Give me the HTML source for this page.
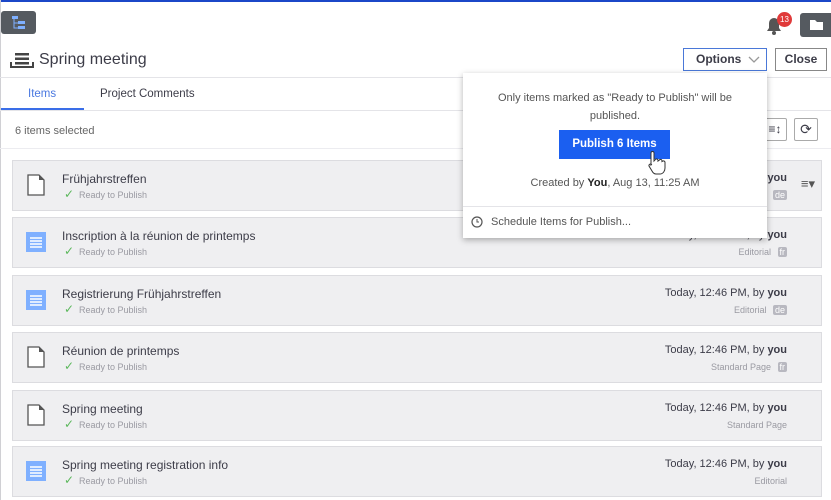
<!DOCTYPE html>
<html><head><meta charset="utf-8"><style>
*{box-sizing:border-box;margin:0;padding:0}
body{width:831px;height:500px;overflow:hidden;background:#fff;font-family:"Liberation Sans",sans-serif;color:#3c3c48;position:relative}
.abs{position:absolute}
.row{position:absolute;left:12px;width:810px;height:51px;background:#efeff1;border:1px solid #dcdce0}
.row .t{position:absolute;left:49px;top:11px;font-size:12px;color:#3c3c48}
.row .s{position:absolute;left:66px;top:29px;font-size:9px;color:#9a9aa2}
.row .ck{position:absolute;left:51px;top:26px;color:#5cb85c;font-size:12px}
.row .d{position:absolute;right:34px;top:11px;font-size:11px;color:#3c3c48}
.row .ty{position:absolute;right:34px;top:29px;font-size:9px;color:#9a9aa2}
.lang{display:inline-block;background:#b8b8c0;color:#fff;font-size:9px;padding:0 2px;border-radius:2px;margin-left:4px}
.doc{position:absolute;left:13px;top:13px;width:20px;height:22px}
</style></head><body>
<div class="abs" style="left:0;top:0;width:831px;height:2px;background:#1b47c8"></div>
<div class="abs" style="left:0;top:0;width:1px;height:500px;background:#d0d0d4"></div>
<div class="abs" style="left:1px;top:11px;width:35px;height:23px;background:#555a60;border-radius:3px">
<svg width="35" height="23"><rect x="11" y="5" width="6" height="3" fill="#7fb0ff"/><rect x="17" y="10" width="7" height="3" fill="#7fb0ff"/><rect x="17" y="15" width="7" height="3" fill="#7fb0ff"/><path d="M13 8V17H17M13 12H17" stroke="#7fb0ff" fill="none"/></svg></div>
<svg class="abs" style="left:764px;top:15px" width="22" height="20"><path d="M3 16h14l-2-3V8a5 5 0 0 0-10 0v5z" fill="#555"/><circle cx="10" cy="18" r="2" fill="#555"/></svg>
<div class="abs" style="left:777px;top:12px;width:15px;height:15px;border-radius:50%;background:#e03a3a;color:#fff;font-size:8px;text-align:center;line-height:15px">13</div>
<div class="abs" style="left:800px;top:13px;width:31px;height:24px;background:#555a60;border-radius:3px 0 0 3px"><svg width="31" height="24"><path d="M10 7h5l2 2h6v8H10z" fill="#fff"/></svg></div>
<svg class="abs" style="left:9px;top:50px" width="26" height="20"><rect x="6" y="3" width="14" height="2.5" fill="#444"/><rect x="6" y="7.5" width="14" height="2.5" fill="#444"/><rect x="6" y="12" width="14" height="2.5" fill="#444"/><path d="M2 12v5h22v-5" stroke="#444" stroke-width="2" fill="none"/></svg>
<div class="abs" style="left:39px;top:51px;font-size:16px;color:#3c3c48">Spring meeting</div>
<div class="abs" style="left:683px;top:48px;width:84px;height:23px;border:1px solid #4a78d8;font-size:12px;font-weight:bold;line-height:21px;padding-left:12px">Options</div>
<svg class="abs" style="left:748px;top:56px" width="12" height="8"><path d="M1 1l5 5 5-5" stroke="#999" fill="none" stroke-width="1.3"/></svg>
<div class="abs" style="left:775px;top:48px;width:52px;height:23px;border:1px solid #888;font-size:12px;font-weight:bold;line-height:21px;text-align:center">Close</div>
<div class="abs" style="left:0;top:77px;width:831px;height:1px;background:#e4e4e8"></div>
<div class="abs" style="left:28px;top:88px;font-size:11.5px;color:#4a78e0">Items</div>
<div class="abs" style="left:100px;top:88px;font-size:11.5px;color:#3c3c48">Project Comments</div>
<div class="abs" style="left:1px;top:108px;width:83px;height:2px;background:#3a6ee8"></div>
<div class="abs" style="left:0;top:110px;width:831px;height:1px;background:#e4e4e8"></div>
<div class="abs" style="left:15px;top:125px;font-size:11px;color:#666">6 items selected</div>
<div class="abs" style="left:763px;top:118px;width:24px;height:23px;border:1px solid #aaa;border-radius:2px;font-size:12px;text-align:center;line-height:21px">≡↕</div>
<div class="abs" style="left:794px;top:118px;width:24px;height:23px;border:1px solid #aaa;border-radius:2px;font-size:14px;text-align:center;line-height:21px">⟳</div>
<div class="abs" style="left:0;top:148px;width:831px;height:1px;background:#ececf0"></div>

<div class="row" style="top:160px"><svg class="doc" viewBox="0 0 20 22"><path d="M2 1h11l5 5v15H2z" fill="#fff" stroke="#555" stroke-width="1.3"/><path d="M13 1v5h5z" fill="#555"/></svg><div class="t">Frühjahrstreffen</div><span class="ck">✓</span><div class="s">Ready to Publish</div><div class="d">Today, 12:46 PM, by <b>you</b></div><div class="ty">Editorial <span class="lang">de</span></div><div class="abs" style="right:6px;top:15px;font-size:13px;color:#555">≡▾</div></div>
<div class="row" style="top:217px"><svg class="doc" viewBox="0 0 20 22"><rect x="0" y="1" width="20" height="20" fill="#7fb0ff"/><path d="M4 7h12M4 10h12M4 13h12M4 16h12" stroke="#fff" stroke-width="1.6"/></svg><div class="t">Inscription à la réunion de printemps</div><span class="ck">✓</span><div class="s">Ready to Publish</div><div class="d">Today, 12:46 PM, by <b>you</b></div><div class="ty">Editorial <span class="lang">fr</span></div></div>
<div class="row" style="top:275px"><svg class="doc" viewBox="0 0 20 22"><rect x="0" y="1" width="20" height="20" fill="#7fb0ff"/><path d="M4 7h12M4 10h12M4 13h12M4 16h12" stroke="#fff" stroke-width="1.6"/></svg><div class="t">Registrierung Frühjahrstreffen</div><span class="ck">✓</span><div class="s">Ready to Publish</div><div class="d">Today, 12:46 PM, by <b>you</b></div><div class="ty">Editorial <span class="lang">de</span></div></div>
<div class="row" style="top:332px"><svg class="doc" viewBox="0 0 20 22"><path d="M2 1h11l5 5v15H2z" fill="#fff" stroke="#555" stroke-width="1.3"/><path d="M13 1v5h5z" fill="#555"/></svg><div class="t">Réunion de printemps</div><span class="ck">✓</span><div class="s">Ready to Publish</div><div class="d">Today, 12:46 PM, by <b>you</b></div><div class="ty">Standard Page <span class="lang">fr</span></div></div>
<div class="row" style="top:390px"><svg class="doc" viewBox="0 0 20 22"><path d="M2 1h11l5 5v15H2z" fill="#fff" stroke="#555" stroke-width="1.3"/><path d="M13 1v5h5z" fill="#555"/></svg><div class="t">Spring meeting</div><span class="ck">✓</span><div class="s">Ready to Publish</div><div class="d">Today, 12:46 PM, by <b>you</b></div><div class="ty">Standard Page</div></div>
<div class="row" style="top:446px"><svg class="doc" viewBox="0 0 20 22"><rect x="0" y="1" width="20" height="20" fill="#7fb0ff"/><path d="M4 7h12M4 10h12M4 13h12M4 16h12" stroke="#fff" stroke-width="1.6"/></svg><div class="t">Spring meeting registration info</div><span class="ck">✓</span><div class="s">Ready to Publish</div><div class="d">Today, 12:46 PM, by <b>you</b></div><div class="ty">Editorial</div></div>

<div class="abs" style="left:463px;top:73px;width:304px;height:165px;background:#fff;box-shadow:0 2px 6px rgba(0,0,0,.3)">
<div class="abs" style="left:0;top:16px;width:304px;text-align:center;font-size:11px;line-height:18px;color:#555">Only items marked as "Ready to Publish" will be<br>published.</div>
<div class="abs" style="left:96px;top:57px;width:111px;height:29px;background:#1b5ff0;color:#fff;font-size:11.5px;font-weight:bold;text-align:center;line-height:29px">Publish 6 Items</div>
<div class="abs" style="left:0;top:104px;width:304px;text-align:center;font-size:11px;color:#555">Created by <b style="color:#222">You</b>, Aug 13, 11:25 AM</div>
<div class="abs" style="left:0;top:133px;width:304px;height:1px;background:#e4e4e8"></div>
<svg class="abs" style="left:8px;top:143px" width="12" height="12"><circle cx="6" cy="6" r="5" stroke="#555" fill="none" stroke-width="1.2"/><path d="M6 3v3h2" stroke="#555" fill="none"/></svg>
<div class="abs" style="left:28px;top:143px;font-size:11px;color:#555">Schedule Items for Publish...</div>
</div>
<svg class="abs" style="left:644px;top:150px" width="22" height="26"><path d="M7 3a1.5 1.5 0 0 1 3 0v8l1-1a1.5 1.5 0 0 1 3 1l1-0.5a1.5 1.5 0 0 1 3 1l0.5-0.2a1.5 1.5 0 0 1 2.5 1V18c0 3-2 6-5 6h-4c-2 0-3-1-4-3l-3-5a1.5 1.5 0 0 1 2.5-1.5L7 15z" fill="#fff" stroke="#333" stroke-width="1"/></svg>
</body></html>
